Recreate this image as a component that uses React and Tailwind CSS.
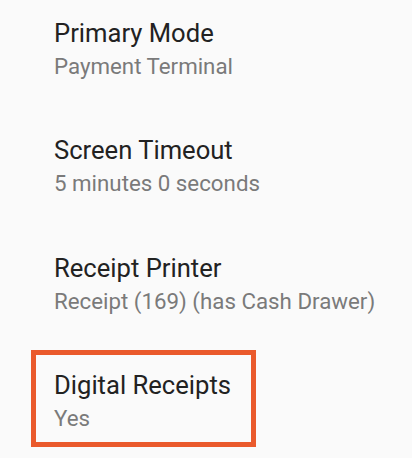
const settings = [
  { title: "Primary Mode", value: "Payment Terminal" },
  { title: "Screen Timeout", value: "5 minutes 0 seconds" },
  { title: "Receipt Printer", value: "Receipt (169) (has Cash Drawer)" },
  { title: "Digital Receipts", value: "Yes", highlight: true },
];

export default function App() {
  return (
    <main
      className="w-[412px] h-[458px] overflow-hidden bg-[#fafafa]"
      style={{ fontFamily: "Roboto, 'Noto Sans', sans-serif" }}
    >
      <ul className="flex flex-col">
        {settings.map((item) => (
          <li
            key={item.title}
            className="relative h-[117.33px] shrink-0 pt-[17px] pl-[54px]"
          >
            <p className="text-[25.6px] leading-[32px] text-[#222222]">
              {item.title}
            </p>
            <p className="mt-[3px] text-[22.3px] leading-[28px] text-[#7a7a7a]">
              {item.value}
            </p>
            {item.highlight && (
              <div className="absolute left-[31px] -top-[2px] w-[225px] h-[97px] border-[5px] border-[#ea5a2c]"></div>
            )}
          </li>
        ))}
      </ul>
    </main>
  );
}
